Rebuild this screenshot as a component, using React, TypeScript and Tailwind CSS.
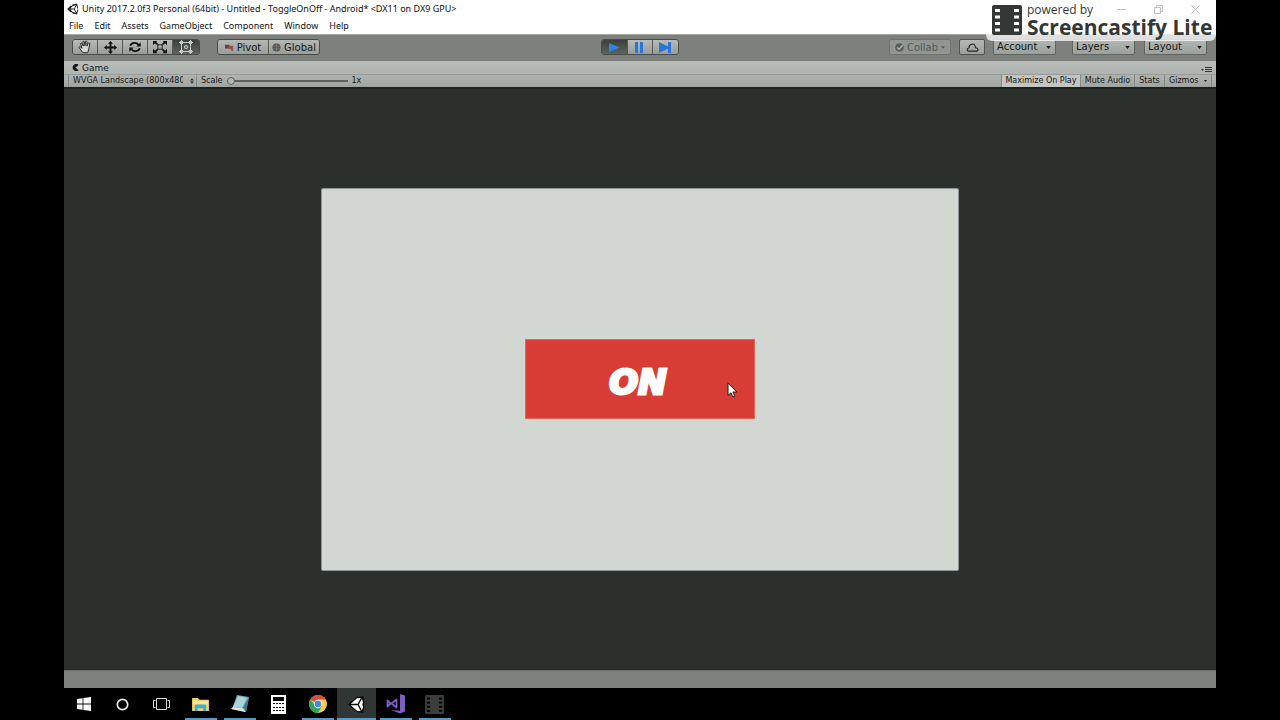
import type { ReactNode } from "react";

const menus = ["File", "Edit", "Assets", "GameObject", "Component", "Window", "Help"];

function UnityMark({ className }: { className: string }) {
  return (
    <svg viewBox="0 0 24 24" className={className} fill="currentColor" aria-hidden="true">
      <path d="M22.4 9.6 20 .8l-8.900 2.400L9.800 5.500H7.100L.6 12l6.500 6.500h2.700l1.300 2.300 8.900 2.400 2.400-8.800L21.100 12zM11.400 6.100l6.400-1.700-3.700 6.400H6.800zm0 11.800-4.600-4.700h7.300l3.700 6.400zm7.800.9-3.700-6.800 3.700-6.800L21 12z" fillRule="evenodd" />
    </svg>
  );
}

function UnityCube({ className }: { className: string }) {
  return (
    <svg viewBox="0 0 18 18" className={className} aria-hidden="true">
      <path d="M0 9 9 1l7-1 1.500 7L16.500 9l1 2L16 18l-7-1z" fill="#0b0d0c" />
      <path d="M3 8.300 9.500 2.500 13.500 2l-3.200 6.300zM3 9.900l6.500 5.600 4 .6-3.200-6.200zM14.700 2.900l-3.200 6.200 3.200 6.200 1.300-3.800-.9-2.400.9-2.400z" fill="#fff" />
    </svg>
  );
}

function FilmStrip({ className }: { className: string }) {
  return (
    <svg viewBox="0 0 30 30" className={className} aria-hidden="true">
      <path
        fill="currentColor"
        fillRule="evenodd"
        d="M2 0h26a2 2 0 0 1 2 2v26a2 2 0 0 1-2 2H2a2 2 0 0 1-2-2V2a2 2 0 0 1 2-2zM3 4v3h5V4zm0 6.500v3h5v-3zM3 17v3h5v-3zm0 6.500v3h5v-3zM22 4v3h5V4zm0 6.500v3h5v-3zm0 6.500v3h5v-3zm0 6.500v3h5v-3z"
      />
    </svg>
  );
}

function Caret({ className }: { className: string }) {
  return (
    <svg viewBox="0 0 6 4" className={className} aria-hidden="true">
      <path d="M0 0h6L3 4z" fill="currentColor" />
    </svg>
  );
}

function ToolButton({ label, active, children }: { label: string; active?: boolean; children: ReactNode }) {
  return (
    <button
      type="button"
      aria-label={label}
      aria-pressed={!!active}
      className={
        active
          ? "flex w-[26px] items-center justify-center bg-linear-to-b from-[#3c403d] to-[#5d625f]"
          : "flex w-[25px] items-center justify-center bg-linear-to-b from-[#b8bbb8] to-[#999d9a]"
      }
    >
      {children}
    </button>
  );
}

const groupClass = "flex h-4 divide-x divide-[#555956] overflow-hidden rounded-[3px] border border-[#484c49]";

function ToolbarSelect({ label }: { label: string }) {
  return (
    <div className="relative">
      <select
        aria-label={label}
        className="block h-4 w-[63px] appearance-none rounded-[2px] border border-[#606461] bg-linear-to-b from-[#b4b8b5] to-[#9ca09d] pl-[3px] text-[10px] leading-[14px] outline-none"
      >
        <option>{label}</option>
      </select>
      <Caret className="pointer-events-none absolute top-[7px] right-[5px] h-[3px] w-[5px]" />
    </div>
  );
}

function TaskButton({ label, state, children }: { label: string; state?: "open" | "active"; children: ReactNode }) {
  return (
    <button
      type="button"
      aria-label={label}
      className={
        state === "active"
          ? "flex h-8 w-[39px] flex-col items-center border-b-2 border-[#569bc4] bg-[#303633] pt-[6px]"
          : "flex h-8 w-[39px] flex-col items-center justify-between pt-[6px]"
      }
    >
      <span className="flex h-5 items-center justify-center">{children}</span>
      {state === "open" && <span className="h-[2px] w-8 bg-[#569bc4]" />}
    </button>
  );
}

function TitleBar() {
  return (
    <header className="bg-white font-['Noto_Sans',sans-serif] text-[9px] text-[#111]">
      <div className="flex h-[18px] items-center justify-between pr-[15px] pl-[3px]">
        <div className="flex items-center gap-[3px]">
          <UnityMark className="size-3 text-[#1c1f1d]" />
          <h1 className="whitespace-nowrap">
            Unity 2017.2.0f3 Personal (64bit) - Untitled - ToggleOnOff - Android* &lt;DX11 on DX9 GPU&gt;
          </h1>
        </div>
        <div className="flex items-center gap-[26px] text-black">
          <button type="button" aria-label="Minimize">
            <svg viewBox="0 0 11 11" className="block size-[11px]"><path d="M1 5.500h9" stroke="currentColor" /></svg>
          </button>
          <button type="button" aria-label="Restore">
            <svg viewBox="0 0 11 11" className="block size-[11px]" fill="none" stroke="currentColor">
              <path d="M1.500 3.500h6v6h-6zM3.500 3.500v-2h6v6h-2" />
            </svg>
          </button>
          <button type="button" aria-label="Close">
            <svg viewBox="0 0 11 11" className="block size-[11px]"><path d="m1.500 1.500 8 8m0-8-8 8" stroke="currentColor" /></svg>
          </button>
        </div>
      </div>
      <nav className="flex h-4 items-center gap-[11px] pl-[5px]">
        {menus.map((m) => (
          <button key={m} type="button">{m}</button>
        ))}
      </nav>
    </header>
  );
}

function Toolbar() {
  return (
    <div className="grid h-[27px] grid-cols-[1fr_auto_1fr] items-center border-t border-[#a4a7a4] bg-[#7d807d] pr-[9px] pb-[2px] pl-2 text-[10px]">
      <div className="flex gap-[17px]">
        <div className={groupClass}>
          <ToolButton label="Hand">
            <svg viewBox="0 0 16 16" className="size-[14px]" fill="#d6d8d6" stroke="#222" strokeWidth="1.100" strokeLinejoin="round">
              <path d="M5.500 14.500 1.500 9c-.8-1.200.6-2 1.500-1.100L4.500 9.500 3 4.500c-.3-1.300 1.300-1.700 1.700-.5L6 7 5.600 2.500c0-1.400 1.600-1.500 1.800-.1L8 6.500l.6-4.300c.2-1.300 1.800-1.100 1.800.2L10.200 7l1.600-3.200c.6-1.200 2-.6 1.600.7-.8 2.500-.4 4.500-1.400 7l-1 3z" />
            </svg>
          </ToolButton>
          <ToolButton label="Move">
            <svg viewBox="0 0 16 16" className="size-[13px]" fill="#111">
              <path d="m8 0 3 3.500H9.200v3.300h3.300V5L16 8l-3.500 3V9.200H9.200v3.300H11L8 16l-3-3.500h1.800V9.200H3.500V11L0 8l3.500-3v1.800h3.300V3.500H5z" />
            </svg>
          </ToolButton>
          <ToolButton label="Rotate">
            <svg viewBox="0 0 16 16" className="size-[14px]" fill="none" stroke="#111" strokeWidth="2">
              <path d="M2.500 6.500C4 2.500 10 2.300 12 5.500M13.500 9.500c-1.500 4-7.500 4.200-9.500 1" />
              <path d="M14.500 2.500v5h-5zM1.500 13.500v-5h5z" fill="#111" stroke="none" />
            </svg>
          </ToolButton>
          <ToolButton label="Scale">
            <svg viewBox="0 0 16 16" className="size-[14px]" fill="#111">
              <path d="M0 1h5L3.700 2.300 6 4.600 4.600 6 2.300 3.700 0 6zM16 1v5l-2.300-2.300L11.400 6 10 4.600l2.300-2.300L11 1zM0 15v-5l2.300 2.300L4.600 10 6 11.400l-2.300 2.300L5 15zM16 15h-5l1.300-1.300-2.300-2.300 1.400-1.400 2.300 2.300L16 10z" />
              <path d="M5.500 5.500h5v5h-5z" fill="none" stroke="#111" />
            </svg>
          </ToolButton>
          <ToolButton label="Rect" active>
            <svg viewBox="0 0 14 14" className="size-[14px]" fill="none" stroke="#c6cac7">
              <path d="M2.500 0v14M11.500 0v14M0 2.500h14M0 11.500h14" />
              <path d="M1 1h3v3H1zM10 1h3v3h-3zM1 10h3v3H1zM10 10h3v3h-3z" fill="#c6cac7" stroke="none" />
              <circle cx="7" cy="7" r="1.500" strokeWidth="1.200" />
            </svg>
          </ToolButton>
        </div>
        <div className={groupClass}>
          <button type="button" className="flex w-[51px] items-center justify-center gap-[3px] bg-linear-to-b from-[#b4b7b4] to-[#9a9e9b]">
            <svg viewBox="0 0 10 10" className="size-[9px]">
              <path d="M0 2h5v4H0z" fill="#5b4545" />
              <path d="M5 3h4v6H7V7H5z" fill="#8a5353" />
              <circle cx="4" cy="5" r="1" fill="#c33" />
            </svg>
            Pivot
          </button>
          <button type="button" className="flex w-[50px] items-center justify-center gap-[3px] bg-linear-to-b from-[#b4b7b4] to-[#9a9e9b]">
            <svg viewBox="0 0 10 10" className="size-[9px]" fill="none">
              <circle cx="5" cy="5" r="4.500" fill="#4e524f" />
              <path d="M1 3.500h8M1 6.500h8M5 1v8" stroke="#8d918e" strokeWidth=".7" />
              <path d="M3 3h3v2H4z" fill="#925c5c" />
            </svg>
            Global
          </button>
        </div>
      </div>

      <div className={groupClass}>
        <ToolButton label="Play" active>
          <svg viewBox="0 0 14 12" className="h-[11px] w-[13px]"><path d="M1 1v10l12-5z" fill="#2b85e3" /></svg>
        </ToolButton>
        <ToolButton label="Pause">
          <svg viewBox="0 0 9 11" className="h-[11px] w-[9px]"><path d="M0 0h3v11H0zM5 0h3v11H5z" fill="#2a74dc" /></svg>
        </ToolButton>
        <ToolButton label="Step">
          <svg viewBox="0 0 13 11" className="h-[11px] w-[13px]"><path d="M0 0v11l9-4.500V11h3V0H9v4.500z" fill="#2a74dc" /></svg>
        </ToolButton>
      </div>

      <div className="flex items-center justify-end">
        <button type="button" disabled className="flex h-4 w-[62px] items-center justify-center gap-[3px] rounded-[2px] border border-[#6f7370] bg-[#929693] text-[#555a56]">
          <svg viewBox="0 0 10 10" className="size-[9px]">
            <circle cx="5" cy="5" r="4.800" fill="#5a5e5b" />
            <path d="m2.500 5 2 2 4-4.500" fill="none" stroke="#b5b8b5" strokeWidth="1.500" />
          </svg>
          Collab
          <Caret className="h-[3px] w-1" />
        </button>
        <button type="button" aria-label="Services" className="ml-2 flex h-4 w-[26px] items-center justify-center rounded-[2px] border border-[#505451] bg-linear-to-b from-[#b4b8b5] to-[#9ca09d]">
          <svg viewBox="0 0 14 10" className="h-[9px] w-[13px]" fill="none" stroke="#222" strokeWidth="1.200">
            <path d="M3.200 9C.5 9 .3 5.800 3 5.500c0-4.500 5.500-6 7-2 .2.700.2 1.200.2 1.700C13.500 5.200 14 9 11.500 9z" />
          </svg>
        </button>
        <div className="ml-2"><ToolbarSelect label="Account" /></div>
        <div className="ml-4"><ToolbarSelect label="Layers" /></div>
        <div className="ml-[9px]"><ToolbarSelect label="Layout" /></div>
      </div>
    </div>
  );
}

function GamePanelBar() {
  return (
    <div className="text-[8px] leading-3">
      <div className="flex h-[13px] items-center justify-between bg-linear-to-b from-[#b9bdba] to-[#b0b4b1] pr-1 pl-2">
        <h2 className="flex items-center gap-[3px] text-[9px]">
          <svg viewBox="0 0 8 8" className="size-[7px]"><path d="M7.500 1A4 4 0 1 0 7.500 7L4 4z" fill="#111" /></svg>
          Game
        </h2>
        <button type="button" aria-label="Panel options" className="mt-[3px]">
          <svg viewBox="0 0 11 5" className="block h-[5px] w-[11px]"><path d="M0 2h3L1.500 4zM4 0h7v1H4zM4 2h7v1H4zM4 4h7v1H4z" fill="#333" /></svg>
        </button>
      </div>
      <div className="flex h-[13px] items-center border-t border-[#989c99] bg-linear-to-b from-[#b0b4b1] to-[#a0a4a1] pr-1 pl-1">
        <div className="relative border-x border-[#858986]">
          <select aria-label="Aspect" className="block h-3 w-[127px] appearance-none overflow-hidden bg-transparent pr-[13px] pl-1 leading-3 text-clip outline-none">
            <option>WVGA Landscape (800x480)</option>
          </select>
          <svg viewBox="0 0 5 7" className="pointer-events-none absolute top-[3px] right-[2px] h-[6px] w-1"><path d="M0 3h5L2.500 0zM0 4h5L2.500 7z" fill="#333" /></svg>
        </div>
        <label htmlFor="scale" className="ml-1">Scale</label>
        <input
          id="scale"
          type="range"
          min="1"
          max="5"
          defaultValue="1"
          className="mx-1 h-[2px] w-[121px] appearance-none bg-[#5c605d] outline-none [&::-webkit-slider-thumb]:size-2 [&::-webkit-slider-thumb]:appearance-none [&::-webkit-slider-thumb]:rounded-full [&::-webkit-slider-thumb]:border [&::-webkit-slider-thumb]:border-[#5c605d] [&::-webkit-slider-thumb]:bg-[#b4b8b5]"
        />
        <span>1x</span>
        <div className="ml-auto flex divide-x divide-[#858986] border-x border-[#858986]">
          <button type="button" aria-pressed="true" className="w-[79px] bg-[#c2c5c2] whitespace-nowrap">Maximize On Play</button>
          <button type="button" className="w-[54px] whitespace-nowrap">Mute Audio</button>
          <button type="button" className="w-[30px]">Stats</button>
          <button type="button" className="flex w-[46px] items-center justify-between px-1">
            Gizmos
            <Caret className="h-[2px] w-[3px]" />
          </button>
        </div>
      </div>
    </div>
  );
}

function Taskbar() {
  return (
    <nav aria-label="Taskbar" className="mx-16 flex h-8 bg-black text-white">
      <TaskButton label="Start">
        <svg viewBox="0 0 14 14" className="size-[14px]" fill="#fff"><path d="m0 2 5.600-.8v5.400H0zM6.400 1.100 14 0v6.600H6.400zM0 7.400h5.600v5.400L0 12zM6.400 7.400H14V14l-7.600-1.100z" /></svg>
      </TaskButton>
      <TaskButton label="Search">
        <svg viewBox="0 0 14 14" className="size-[13px]"><circle cx="7" cy="7" r="5.600" fill="none" stroke="#eee" strokeWidth="1.800" /></svg>
      </TaskButton>
      <TaskButton label="Task view">
        <svg viewBox="0 0 17 12" className="h-3 w-[17px]" fill="none" stroke="#ddd"><path d="M3.500.5h10v11h-10zM2.500 2.500h-2v7h2M14.500 2.500h2v7h-2" /></svg>
      </TaskButton>
      <TaskButton label="File Explorer" state="open">
        <svg viewBox="0 0 18 16" className="h-[15px] w-[17px]">
          <path d="M0 1h6l2 2h10v12H0z" fill="#ecd06c" />
          <path d="M1 4h16v4H1z" fill="#f8e49b" />
          <path d="M3 15V9.500Q3 8 4.500 8h9Q15 8 15 9.500V15h-3v-3H6v3z" fill="#39aed4" />
        </svg>
      </TaskButton>
      <TaskButton label="Notepad" state="open">
        <svg viewBox="0 0 18 18" className="size-[18px]">
          <path d="m6 0 12 2-3 15-14-3z" fill="#6aa8b2" />
          <path d="m7 1 9 2-5 10-9-1z" fill="#a9d4d8" />
          <path d="m0 14 14 3 1-3-13-2z" fill="#dce8e8" />
          <path d="m18 2-3 15-3-4z" fill="#397985" />
        </svg>
      </TaskButton>
      <TaskButton label="Calculator">
        <svg viewBox="0 0 15 19" className="h-[19px] w-[15px]">
          <path d="M0 0h15v19H0z" fill="#fff" />
          <path d="M2 2h11v4H2zM2 8h2v1H2zM5 8h2v1H5zM8 8h2v1H8zM11 8h2v1h-2zM2 12h2v1H2zM5 12h2v1H5zM8 12h2v1H8zM11 12h2v1h-2zM2 15h2v1H2zM5 15h2v1H5zM8 15h2v1H8zM11 15h2v1h-2z" fill="#000" />
        </svg>
      </TaskButton>
      <TaskButton label="Chrome" state="open">
        <svg viewBox="0 0 18 18" className="size-[18px]">
          <circle cx="9" cy="9" r="9" fill="#f6cf45" />
          <path d="M9 9 1.200 4.500A9 9 0 0 1 16.800 4.500H9z" fill="#dc4b3e" />
          <path d="M1.200 4.500A9 9 0 0 0 9 18l4-6.800L9 9H5z" fill="#36a35a" />
          <circle cx="9" cy="9" r="4.200" fill="#fff" />
          <circle cx="9" cy="9" r="3.300" fill="#4a83e0" />
        </svg>
      </TaskButton>
      <TaskButton label="Unity" state="active"><UnityCube className="size-[17px]" /></TaskButton>
      <TaskButton label="Visual Studio" state="open">
        <svg viewBox="0 0 20 20" className="size-5">
          <path d="m14 0 5 1.500v16L14 19.500l-9-3.500 9 .8z" fill="#7c5fc0" />
          <path d="M1.500 6.500v6l3-3zM10.500 5.500v8l-5-4z" fill="none" stroke="#7c5fc0" strokeWidth="1.800" strokeLinejoin="round" />
        </svg>
      </TaskButton>
      <TaskButton label="Screencastify" state="open"><FilmStrip className="size-[19px] text-[#3b3f3c]" /></TaskButton>
    </nav>
  );
}

export default function App() {
  return (
    <div className="flex min-h-screen flex-col bg-black font-['DejaVu_Sans',sans-serif] text-[#161816]">
      <div className="relative mx-16 flex flex-1 flex-col">
        <TitleBar />
        <Toolbar />
        <GamePanelBar />
        <main className="flex flex-1 items-center justify-center border-t-2 border-[#1c201d] bg-[#2c302d] py-8">
          <div className="flex aspect-[638/382] w-[55.400%] items-center justify-center rounded-[2px] border border-[#8e9699] bg-[#d3d7d2]">
            <button
              type="button"
              className="h-20 w-[230px] border border-[#e0675c] bg-[#d83c35] pt-[6px] pr-1 text-[34px] leading-10 font-bold text-white italic [-webkit-text-stroke:3px_white]"
            >
              ON
            </button>
          </div>
        </main>
        <footer className="h-[18px] border-t border-[#686c69] bg-[#7e827e]" />

        <aside className="absolute top-0 right-0 flex h-[41px] w-[230px] gap-[5px] rounded-b-md bg-white/75 pt-[5px] pl-[6px] font-['Open_Sans',sans-serif] text-[#333735]">
          <FilmStrip className="size-[30px]" />
          <p className="flex flex-col whitespace-nowrap">
            <span className="-mt-[2px] text-[12px] leading-[14px]">powered by</span>
            <strong className="text-[21px] leading-5 font-bold">Screencastify Lite</strong>
          </p>
        </aside>

        <svg viewBox="0 0 12 18" className="pointer-events-none absolute top-[382px] left-[calc(50%+87px)] h-4 w-[11px]" aria-hidden="true">
          <path d="M1 1v14l3.300-3 2.200 5 2.200-1-2.200-4.800H11z" fill="#fff" stroke="#111" />
        </svg>
      </div>
      <Taskbar />
    </div>
  );
}
